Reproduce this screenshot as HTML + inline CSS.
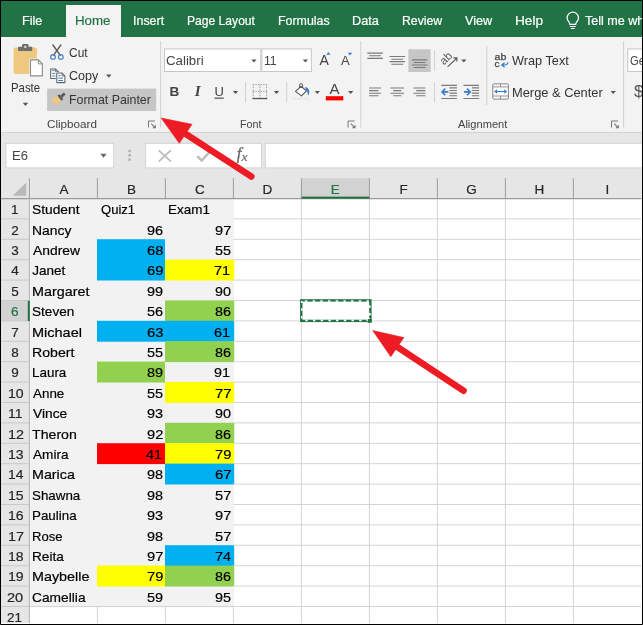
<!DOCTYPE html>
<html lang="en">
<head>
<meta charset="utf-8">
<title>Excel - Format Painter</title>
<style>
html,body{margin:0;padding:0;}
body{width:643px;height:625px;overflow:hidden;background:#fff;position:relative;font-family:"Liberation Sans",sans-serif;}
#app{position:absolute;left:0;top:0;width:643px;height:625px;overflow:hidden;background:#fff;}
svg{position:absolute;left:0;top:0;will-change:transform;}
.r{position:absolute;}
#txt{position:absolute;left:0;top:0;width:643px;height:625px;will-change:transform;}
.t{position:absolute;white-space:pre;transform-origin:0 0;font-family:"Liberation Sans",sans-serif;}
</style>
</head>
<body>
<div id="app">
<!-- base layer: backgrounds -->
<div class="r" style="left:0;top:0;width:643px;height:37px;background:#217346"></div>
<div class="r" style="left:0;top:37px;width:643px;height:95.5px;background:#f3f3f3"></div>
<div class="r" style="left:0;top:132.4px;width:643px;height:66.2px;background:#e6e6e6"></div>
<div class="r" style="left:65.6px;top:4.8px;width:55.9px;height:33px;background:#f3f3f3"></div>

<svg width="643" height="625" viewBox="0 0 643 625">
<rect x="29.90" y="199.00" width="204.30" height="408.30" fill="#f2f2f2"/>
<rect x="97.00" y="239.20" width="68.00" height="20.90" fill="#00b0f0"/>
<rect x="97.00" y="259.60" width="68.00" height="20.90" fill="#00b0f0"/>
<rect x="165.00" y="259.60" width="69.20" height="20.90" fill="#ffff00"/>
<rect x="165.00" y="300.40" width="69.20" height="20.90" fill="#92d050"/>
<rect x="97.00" y="320.80" width="68.00" height="20.90" fill="#00b0f0"/>
<rect x="165.00" y="320.80" width="69.20" height="20.90" fill="#00b0f0"/>
<rect x="165.00" y="341.20" width="69.20" height="20.90" fill="#92d050"/>
<rect x="97.00" y="361.60" width="68.00" height="20.90" fill="#92d050"/>
<rect x="165.00" y="382.00" width="69.20" height="20.90" fill="#ffff00"/>
<rect x="165.00" y="422.80" width="69.20" height="20.90" fill="#92d050"/>
<rect x="97.00" y="443.20" width="68.00" height="20.90" fill="#ff0000"/>
<rect x="165.00" y="443.20" width="69.20" height="20.90" fill="#ffff00"/>
<rect x="165.00" y="463.60" width="69.20" height="20.90" fill="#00b0f0"/>
<rect x="165.00" y="545.20" width="69.20" height="20.90" fill="#00b0f0"/>
<rect x="97.00" y="565.60" width="68.00" height="20.90" fill="#ffff00"/>
<rect x="165.00" y="565.60" width="69.20" height="20.90" fill="#92d050"/>
<!-- ===== ribbon bottom line ===== -->
<rect x="0" y="131.9" width="643" height="1" fill="#d2d2d2"/>
<!-- ===== group separators ===== -->
<g stroke="#d0d0d0" stroke-width="1" fill="none">
<line x1="160.6" y1="41" x2="160.6" y2="127.5"/>
<line x1="360.8" y1="41" x2="360.8" y2="127.5"/>
<line x1="623.6" y1="41" x2="623.6" y2="127.5"/>
<line x1="245.5" y1="82" x2="245.5" y2="102.6"/>
<line x1="286.7" y1="82" x2="286.7" y2="102.6"/>
<line x1="434.6" y1="50.5" x2="434.6" y2="71"/>
<line x1="434.6" y1="82" x2="434.6" y2="102.6"/>
<line x1="486.8" y1="46.2" x2="486.8" y2="105"/>
</g>
<!-- ===== clipboard group ===== -->
<!-- paste icon -->
<g>
<rect x="14" y="47.9" width="22.5" height="25.7" rx="1.2" fill="#eec87e" stroke="#ecc470" stroke-width="0.7"/>
<rect x="22.1" y="44" width="6.4" height="4" rx="0.8" fill="#6e6e6e"/>
<rect x="18.1" y="46.7" width="14.1" height="4.3" rx="0.6" fill="#6e6e6e"/>
<circle cx="25.3" cy="46.9" r="1.1" fill="#e8e8e8"/>
<path d="M29.3 58.6 H39 L43.7 63.3 V77.1 H29.3 Z" fill="#f3f3f3"/>
<path d="M30.5 59.9 H38.4 L42.4 63.9 V75.9 H30.5 Z" fill="#fff" stroke="#8c8c8c" stroke-width="1.1" stroke-linejoin="round"/>
<path d="M38.4 59.9 V63.9 H42.4" fill="none" stroke="#8c8c8c" stroke-width="1"/>
</g>
<path d="M22.7 102.8 H28.2 L25.45 106.1 Z" fill="#555"/>
<!-- cut icon -->
<g fill="none" stroke-linecap="round">
<path d="M52.9 45 L60.2 55.2" stroke="#5a5a5a" stroke-width="1.4"/>
<path d="M60.9 45 L53.6 55.2" stroke="#5a5a5a" stroke-width="1.4"/>
<circle cx="53" cy="56.9" r="2.35" stroke="#4a7fc1" stroke-width="1.2"/>
<circle cx="60.8" cy="56.9" r="2.35" stroke="#4a7fc1" stroke-width="1.2"/>
</g>
<!-- copy icon -->
<g stroke-linejoin="round">
<path d="M50.7 69 H55.6 L58.4 71.8 V78.4 H50.7 Z" fill="#fff" stroke="#636363" stroke-width="1.05"/>
<path d="M55.6 69 V71.8 H58.4" fill="none" stroke="#636363" stroke-width="0.9"/>
<path d="M52.2 70.6 H54.6 M52.2 73.4 H55.4 M52.2 76 H55.4" stroke="#3b7cc9" stroke-width="1"/>
<path d="M55.9 72 H62.4 L65.5 75.1 V83.4 H55.9 Z" fill="#f3f3f3"/>
<path d="M56.8 73 H62 L64.9 75.9 V82.6 H56.8 Z" fill="#fff" stroke="#636363" stroke-width="1.05"/>
<path d="M62 73 V75.9 H64.9" fill="none" stroke="#636363" stroke-width="0.9"/>
<path d="M58.4 75.7 H60.6 M58.4 78.1 H63 M58.4 80.5 H63" stroke="#3b7cc9" stroke-width="1"/>
</g>
<path d="M106.2 74.6 H111.4 L108.8 77.8 Z" fill="#555"/>
<!-- format painter highlight + icon -->
<rect x="47.1" y="88.6" width="109.1" height="22.4" fill="#c6c6c6"/>
<g>
<path d="M50.9 99.4 L57.3 96 L61 101 L56.6 105.6 Z" fill="#eec87e"/>
<path d="M57.4 95.6 L59.5 94.2 L63.2 99 L61.4 100.8 Z" fill="#595959"/>
<path d="M60.4 95.6 L63.9 92.6 L65.6 94.5 L62.2 97.7 Z" fill="#595959"/>
</g>
<!-- dialog launchers -->
<g id="dl" fill="none" stroke="#777" stroke-width="1">
<path d="M148.5 127.5 V121 H155"/>
<path d="M151.2 123.7 L154.4 126.9" stroke-width="1.1"/><path d="M155.9 128.3 V124.7 L152.3 128.3 Z" fill="#777" stroke="none"/>
</g>
<g fill="none" stroke="#777" stroke-width="1" transform="translate(199.6,0)">
<path d="M148.5 127.5 V121 H155"/>
<path d="M151.2 123.7 L154.4 126.9" stroke-width="1.1"/><path d="M155.9 128.3 V124.7 L152.3 128.3 Z" fill="#777" stroke="none"/>
</g>
<g fill="none" stroke="#777" stroke-width="1" transform="translate(463,0)">
<path d="M148.5 127.5 V121 H155"/>
<path d="M151.2 123.7 L154.4 126.9" stroke-width="1.1"/><path d="M155.9 128.3 V124.7 L152.3 128.3 Z" fill="#777" stroke="none"/>
</g>
<!-- ===== font group ===== -->
<rect x="164.5" y="48.9" width="96.3" height="22.6" fill="#fff" stroke="#c6c6c6" stroke-width="1"/>
<rect x="261.9" y="48.9" width="49.5" height="22.6" fill="#fff" stroke="#c6c6c6" stroke-width="1"/>
<path d="M251.4 59.5 H256.6 L254 62.6 Z" fill="#555"/>
<path d="M302.8 59.5 H308 L305.4 62.6 Z" fill="#555"/>
<!-- grow/shrink carets -->
<path d="M326.2 54.7 L328.4 52 L330.6 54.7 Z" fill="#3b7cc9"/>
<path d="M347.8 52.7 H352.2 L350 55.4 Z" fill="#3b7cc9"/>
<!-- underline for U -->
<rect x="214.5" y="97.6" width="9.3" height="1.1" fill="#444"/>
<path d="M232.9 90.9 H238.1 L235.5 94 Z" fill="#555"/>
<!-- borders icon -->
<g stroke="#9a9a9a" stroke-width="1" stroke-dasharray="1.3 1.3" fill="none">
<path d="M252.8 84.6 H267 M252.8 91.4 H267 M253.2 84.2 V98 M259.9 84.2 V98 M266.6 84.2 V98"/>
</g>
<rect x="252.5" y="97.9" width="14.7" height="1.3" fill="#555"/>
<path d="M273.9 90.9 H279.1 L276.5 94 Z" fill="#555"/>
<!-- fill bucket -->
<g>
<path d="M295.5 91.4 L301 86.4 L306.5 90.8 L301.5 95.9 Z" fill="#fff" stroke="#555" stroke-width="1.1" stroke-linejoin="round"/>
<path d="M299.6 87.6 V85.2 A1.5 1.5 0 0 1 302.6 85.2 V87.6" fill="none" stroke="#555" stroke-width="1"/>
<path d="M304.9 87 C307.5 87.2 309.6 89.6 309.3 92.5 C309.2 93.8 308.6 94.9 307.9 95.4 C308 93.5 307.6 92.3 306.6 90.8 Z" fill="#3b7cc9"/>
<rect x="292.5" y="97.4" width="17" height="2.6" fill="#ececec"/>
</g>
<path d="M314.7 90.9 H319.9 L317.3 94 Z" fill="#555"/>
<!-- font colour bar -->
<rect x="325.8" y="96.2" width="17.5" height="4.2" fill="#ff0000"/>
<path d="M348.1 90.9 H353.3 L350.7 94 Z" fill="#555"/>
<!-- ===== alignment group ===== -->
<rect x="408.4" y="49.3" width="22.2" height="22.7" fill="#c6c6c6"/>
<g stroke="#7a7a7a" stroke-width="1.1" fill="none">
<path d="M367.3 53.1 H382.9 M369.1 55.7 H381 M367.3 58.4 H382.9"/>
<path d="M389.5 56.5 H405.1 M391.4 59.2 H403.2 M389.5 61.6 H405.1 M391.4 64.3 H403.2"/>
<path d="M411.9 59.9 H427.3 M413.8 62.5 H425.4 M411.9 65 H427.3 M413.8 67.5 H425.4"/>
<path d="M369.1 88 H381 M369.1 90.6 H378.5 M369.1 93.2 H381 M369.1 95.8 H378.5"/>
<path d="M390.4 88 H404.1 M393.2 90.6 H401.4 M390.4 93.2 H404.1 M393.2 95.8 H401.4"/>
<path d="M413.5 88 H425.4 M416.2 90.6 H425.4 M413.5 93.2 H425.4 M416.2 95.8 H425.4"/>
</g>
<!-- orientation icon -->
<g>
<text transform="translate(443.9,65.4) rotate(-45)" font-family="Liberation Sans, sans-serif" font-size="11.5" fill="#555">ab</text>
<path d="M447.6 66.8 L456.5 58.3 M453.4 57.9 H456.9 V61.4" fill="none" stroke="#555" stroke-width="1.1"/>
<path d="M461.2 59.4 H466.4 L463.8 62.5 Z" fill="#555"/>
</g>
<!-- indent icons -->
<g stroke="#7a7a7a" stroke-width="1.1" fill="none">
<path d="M441.3 85.4 H456.9 M449.4 87.9 H456.9 M449.4 90.5 H456.9 M449.4 93.1 H456.9 M449.4 95.8 H456.9 M441.3 98.5 H456.9"/>
<path d="M463.5 85.4 H479.1 M471.9 87.9 H479.1 M471.9 90.5 H479.1 M471.9 93.1 H479.1 M471.9 95.8 H479.1 M463.5 98.5 H479.1"/>
</g>
<g stroke="#3b7cc9" stroke-width="1.6" fill="none">
<path d="M448.4 91.9 H442.3 M445.3 88.6 L442 91.9 L445.3 95.2"/>
<path d="M463.9 91.9 H469.9 M467 88.6 L470.3 91.9 L467 95.2"/>
</g>
<!-- wrap text icon -->
<text x="494.6" y="59.7" font-family="Liberation Sans, sans-serif" font-size="9.5" fill="#444" stroke="#444" stroke-width="0.25" textLength="11.8" lengthAdjust="spacingAndGlyphs">ab</text>
<text x="494.6" y="66.7" font-family="Liberation Sans, sans-serif" font-size="9.5" fill="#444" stroke="#444" stroke-width="0.25" textLength="5" lengthAdjust="spacingAndGlyphs">c</text>
<path d="M507.8 62.2 C508 64.4 506 65.3 502.2 65.1 M504.6 62.8 L501.8 65.1 L504.6 67.2" fill="none" stroke="#3b7cc9" stroke-width="1.2"/>
<!-- merge icon -->
<g>
<rect x="492.8" y="83.9" width="15.6" height="15.2" rx="0.8" fill="#fcfcfc" stroke="#858585" stroke-width="1"/>
<path d="M492.8 86.9 H508.4 M492.8 96 H508.4 M500.5 83.9 V86.9 M500.5 96 V99.1" stroke="#8a8a8a" stroke-width="0.9" fill="none"/>
<path d="M495.4 91.5 H505.8" stroke="#3b7cc9" stroke-width="1.1" fill="none"/>
<path d="M494.1 91.5 L497 89.2 V93.8 Z M507.1 91.5 L504.2 89.2 V93.8 Z" fill="#3b7cc9"/>
</g>
<path d="M610.6 90.9 H615.8 L613.2 94 Z" fill="#555"/>
<!-- number format box (cut off) -->
<rect x="627.8" y="48.9" width="20" height="22.6" fill="#fff" stroke="#c6c6c6" stroke-width="1"/>
<!-- tell me bulb -->
<g fill="none" stroke="#fff" stroke-width="1.2">
<path d="M569.9 24.3 C569.9 22 567.1 21 567.1 17.9 A5.7 5.7 0 0 1 578.5 17.9 C578.5 21 575.7 22 575.7 24.3 Z"/>
<path d="M569.9 26.5 H575.7 M570.9 28.5 H574.7"/>
</g>
<!-- ===== formula bar ===== -->
<rect x="6" y="143.3" width="107.6" height="24.6" fill="#fff" stroke="#d0d0d0" stroke-width="0.9"/>
<path d="M100.4 153.7 H106.6 L103.5 157.7 Z" fill="#666"/>
<g fill="#b2b2b2">
<rect x="128.3" y="149.8" width="2.6" height="2.4"/>
<rect x="128.3" y="154.1" width="2.6" height="2.4"/>
<rect x="128.3" y="158.4" width="2.6" height="2.4"/>
</g>
<rect x="145.7" y="143.3" width="115.8" height="24.6" fill="#fff" stroke="#d0d0d0" stroke-width="0.9"/>
<rect x="265.3" y="143.3" width="380" height="24.6" fill="#fff" stroke="#d0d0d0" stroke-width="0.9"/>
<path d="M158.8 150.4 L170.8 161.4 M170.8 150.4 L158.8 161.4" stroke="#b8b8b8" stroke-width="1.5" fill="none"/>
<path d="M197.3 156.2 L201.7 160.6 L209.2 152.4" stroke="#bcbcbc" stroke-width="2.4" fill="none"/>

<g stroke="#d4d4d4" stroke-width="1" fill="none">
<line x1="97.40" y1="607.00" x2="97.40" y2="624"/>
<line x1="165.40" y1="607.00" x2="165.40" y2="624"/>
<line x1="233.40" y1="607.00" x2="233.40" y2="624"/>
<line x1="301.40" y1="199.00" x2="301.40" y2="624"/>
<line x1="369.40" y1="199.00" x2="369.40" y2="624"/>
<line x1="437.40" y1="199.00" x2="437.40" y2="624"/>
<line x1="505.40" y1="199.00" x2="505.40" y2="624"/>
<line x1="573.40" y1="199.00" x2="573.40" y2="624"/>
<line x1="233.40" y1="218.90" x2="641" y2="218.90"/>
<line x1="233.40" y1="239.30" x2="641" y2="239.30"/>
<line x1="233.40" y1="259.70" x2="641" y2="259.70"/>
<line x1="233.40" y1="280.10" x2="641" y2="280.10"/>
<line x1="233.40" y1="300.50" x2="641" y2="300.50"/>
<line x1="233.40" y1="320.90" x2="641" y2="320.90"/>
<line x1="233.40" y1="341.30" x2="641" y2="341.30"/>
<line x1="233.40" y1="361.70" x2="641" y2="361.70"/>
<line x1="233.40" y1="382.10" x2="641" y2="382.10"/>
<line x1="233.40" y1="402.50" x2="641" y2="402.50"/>
<line x1="233.40" y1="422.90" x2="641" y2="422.90"/>
<line x1="233.40" y1="443.30" x2="641" y2="443.30"/>
<line x1="233.40" y1="463.70" x2="641" y2="463.70"/>
<line x1="233.40" y1="484.10" x2="641" y2="484.10"/>
<line x1="233.40" y1="504.50" x2="641" y2="504.50"/>
<line x1="233.40" y1="524.90" x2="641" y2="524.90"/>
<line x1="233.40" y1="545.30" x2="641" y2="545.30"/>
<line x1="233.40" y1="565.70" x2="641" y2="565.70"/>
<line x1="233.40" y1="586.10" x2="641" y2="586.10"/>
<line x1="29.40" y1="606.50" x2="641" y2="606.50"/>
</g>
<rect x="0" y="198.50" width="29.40" height="430" fill="#e6e6e6"/>
<rect x="301.70" y="178.3" width="67.70" height="20" fill="#d2d2d2"/>
<rect x="301.70" y="196.8" width="67.70" height="1.9" fill="#217346"/>
<rect x="0" y="300.80" width="29.40" height="20.10" fill="#d2d2d2"/>
<g stroke="#9c9c9c" stroke-width="1" fill="none">
<line x1="29.40" y1="178.2" x2="29.40" y2="198.5"/>
<line x1="97.40" y1="178.2" x2="97.40" y2="198.5"/>
<line x1="165.40" y1="178.2" x2="165.40" y2="198.5"/>
<line x1="233.40" y1="178.2" x2="233.40" y2="198.5"/>
<line x1="301.40" y1="178.2" x2="301.40" y2="198.5"/>
<line x1="369.40" y1="178.2" x2="369.40" y2="198.5"/>
<line x1="437.40" y1="178.2" x2="437.40" y2="198.5"/>
<line x1="505.40" y1="178.2" x2="505.40" y2="198.5"/>
<line x1="573.40" y1="178.2" x2="573.40" y2="198.5"/>
</g>
<g stroke="#c9c9c9" stroke-width="1" fill="none">
<line x1="1" y1="218.90" x2="29.40" y2="218.90"/>
<line x1="1" y1="239.30" x2="29.40" y2="239.30"/>
<line x1="1" y1="259.70" x2="29.40" y2="259.70"/>
<line x1="1" y1="280.10" x2="29.40" y2="280.10"/>
<line x1="1" y1="300.50" x2="29.40" y2="300.50"/>
<line x1="1" y1="320.90" x2="29.40" y2="320.90"/>
<line x1="1" y1="341.30" x2="29.40" y2="341.30"/>
<line x1="1" y1="361.70" x2="29.40" y2="361.70"/>
<line x1="1" y1="382.10" x2="29.40" y2="382.10"/>
<line x1="1" y1="402.50" x2="29.40" y2="402.50"/>
<line x1="1" y1="422.90" x2="29.40" y2="422.90"/>
<line x1="1" y1="443.30" x2="29.40" y2="443.30"/>
<line x1="1" y1="463.70" x2="29.40" y2="463.70"/>
<line x1="1" y1="484.10" x2="29.40" y2="484.10"/>
<line x1="1" y1="504.50" x2="29.40" y2="504.50"/>
<line x1="1" y1="524.90" x2="29.40" y2="524.90"/>
<line x1="1" y1="545.30" x2="29.40" y2="545.30"/>
<line x1="1" y1="565.70" x2="29.40" y2="565.70"/>
<line x1="1" y1="586.10" x2="29.40" y2="586.10"/>
<line x1="1" y1="606.50" x2="29.40" y2="606.50"/>
</g>
<line x1="1" y1="198.60" x2="641.5" y2="198.60" stroke="#9a9a9a" stroke-width="1.1"/>
<line x1="29.40" y1="198.50" x2="29.40" y2="624" stroke="#b4b4b4" stroke-width="1"/>
<rect x="27.80" y="300.80" width="2" height="20.20" fill="#217346"/>
<rect x="301.70" y="196.8" width="67.70" height="1.9" fill="#217346"/>
<path d="M26.3 182.6 V195.8 H12.6 Z" fill="#b9b9b9"/>
<rect x="301.3" y="300.4" width="69.1" height="20.5" fill="none" stroke="#217346" stroke-width="2.4"/>
<rect x="301.9" y="301" width="67.9" height="19.3" fill="none" stroke="#fff" stroke-width="1.7" stroke-dasharray="2.4 5.3" stroke-dashoffset="-3"/>
<rect x="366.6" y="318" width="3.4" height="3.2" fill="#fff"/>
<rect x="367.7" y="319" width="4" height="3.8" fill="#217346"/>
</svg>
<div id="txt">
<span class="t" style="left:21.66px;top:13px;color:#fff;font-size:13.5px;line-height:15px;-webkit-text-stroke:0.2px;transform:scaleX(0.9383);">File</span>
<span class="t" style="left:75.31px;top:13px;color:#217346;font-size:13.5px;line-height:15px;-webkit-text-stroke:0.2px;transform:scaleX(0.9855);">Home</span>
<span class="t" style="left:132.85px;top:13px;color:#fff;font-size:13.5px;line-height:15px;-webkit-text-stroke:0.2px;transform:scaleX(0.9231);">Insert</span>
<span class="t" style="left:187.10px;top:13px;color:#fff;font-size:13.5px;line-height:15px;-webkit-text-stroke:0.2px;transform:scaleX(0.8963);">Page Layout</span>
<span class="t" style="left:278.08px;top:13px;color:#fff;font-size:13.5px;line-height:15px;-webkit-text-stroke:0.2px;transform:scaleX(0.9187);">Formulas</span>
<span class="t" style="left:352.35px;top:13px;color:#fff;font-size:13.5px;line-height:15px;-webkit-text-stroke:0.2px;transform:scaleX(0.9455);">Data</span>
<span class="t" style="left:402.09px;top:13px;color:#fff;font-size:13.5px;line-height:15px;-webkit-text-stroke:0.2px;transform:scaleX(0.9087);">Review</span>
<span class="t" style="left:465.40px;top:13px;color:#fff;font-size:13.5px;line-height:15px;-webkit-text-stroke:0.2px;transform:scaleX(0.9379);">View</span>
<span class="t" style="left:514.99px;top:13px;color:#fff;font-size:13.5px;line-height:15px;-webkit-text-stroke:0.2px;transform:scaleX(1.0095);">Help</span>
<span class="t" style="left:584.57px;top:13px;color:#fff;font-size:13.5px;line-height:15px;-webkit-text-stroke:0.2px;transform:scaleX(0.9304);">Tell me wh</span>
<span class="t" style="left:10.88px;top:80px;color:#333;font-size:13px;line-height:15px;transform:scaleX(0.8740);">Paste</span>
<span class="t" style="left:68.81px;top:45px;color:#333;font-size:13px;line-height:15px;transform:scaleX(0.9231);">Cut</span>
<span class="t" style="left:68.78px;top:68px;color:#333;font-size:13px;line-height:15px;transform:scaleX(0.9661);">Copy</span>
<span class="t" style="left:68.75px;top:92px;color:#333;font-size:13px;line-height:15px;transform:scaleX(0.9522);">Format Painter</span>
<span class="t" style="left:46.79px;top:118px;color:#444;font-size:11.5px;line-height:12px;transform:scaleX(1.0146);">Clipboard</span>
<span class="t" style="left:166.23px;top:53px;color:#444;font-size:13px;line-height:15px;transform:scaleX(1.0213);">Calibri</span>
<span class="t" style="left:264.06px;top:53px;color:#444;font-size:13px;line-height:15px;transform:scaleX(0.9362);">11</span>
<span class="t" style="left:240.27px;top:118px;color:#444;font-size:11.5px;line-height:12px;transform:scaleX(0.9341);">Font</span>
<span class="t" style="left:512.40px;top:53px;color:#333;font-size:13px;line-height:15px;transform:scaleX(0.9793);">Wrap Text</span>
<span class="t" style="left:511.51px;top:85px;color:#333;font-size:13px;line-height:15px;transform:scaleX(0.9890);">Merge &amp; Center</span>
<span class="t" style="left:458.40px;top:118px;color:#444;font-size:11.5px;line-height:12px;transform:scaleX(0.9647);">Alignment</span>
<span class="t" style="left:629.85px;top:53px;color:#444;font-size:13px;line-height:15px;transform:scaleX(0.8625);">Ge</span>
<span class="t" style="left:634.00px;top:82px;color:#555;font-size:17px;line-height:19px;">$</span>
<span class="t" style="left:11.70px;top:148px;color:#444;font-size:13px;line-height:15px;transform:scaleX(1.0035);">E6</span>
<span class="t" style="left:169.62px;top:84px;color:#444;font-size:13.5px;line-height:15px;font-weight:bold;">B</span>
<span class="t" style="left:194.75px;top:83px;color:#444;font-size:15px;line-height:17px;font-style:italic;font-family:Liberation Serif,serif;font-weight:bold;">I</span>
<span class="t" style="left:214.38px;top:84px;color:#444;font-size:13px;line-height:15px;">U</span>
<span class="t" style="left:319.50px;top:52px;color:#444;font-size:14px;line-height:16px;">A</span>
<span class="t" style="left:340.88px;top:53px;color:#444;font-size:13px;line-height:15px;">A</span>
<span class="t" style="left:329.50px;top:80px;color:#444;font-size:15px;line-height:17px;">A</span>
<span class="t" style="left:236.68px;top:145px;color:#6a6a6a;font-size:16.5px;line-height:18px;font-style:italic;font-family:Liberation Serif,serif;-webkit-text-stroke:0.35px;">f</span>
<span class="t" style="left:241.62px;top:149px;color:#6a6a6a;font-size:13.5px;line-height:15px;font-style:italic;font-family:Liberation Serif,serif;-webkit-text-stroke:0.35px;-webkit-text-stroke:0.2px;">x</span>
<span class="t" style="left:59.62px;top:182px;color:#262626;font-size:13.5px;line-height:15px;-webkit-text-stroke:0.2px;">A</span>
<span class="t" style="left:126.88px;top:182px;color:#262626;font-size:13.5px;line-height:15px;-webkit-text-stroke:0.2px;">B</span>
<span class="t" style="left:194.90px;top:182px;color:#262626;font-size:13.5px;line-height:15px;-webkit-text-stroke:0.2px;">C</span>
<span class="t" style="left:262.50px;top:182px;color:#262626;font-size:13.5px;line-height:15px;-webkit-text-stroke:0.2px;">D</span>
<span class="t" style="left:330.65px;top:182px;color:#217346;font-size:13.5px;line-height:15px;-webkit-text-stroke:0.2px;">E</span>
<span class="t" style="left:399.52px;top:182px;color:#262626;font-size:13.5px;line-height:15px;-webkit-text-stroke:0.2px;">F</span>
<span class="t" style="left:466.23px;top:182px;color:#262626;font-size:13.5px;line-height:15px;-webkit-text-stroke:0.2px;">G</span>
<span class="t" style="left:534.58px;top:182px;color:#262626;font-size:13.5px;line-height:15px;-webkit-text-stroke:0.2px;">H</span>
<span class="t" style="left:605.48px;top:182px;color:#262626;font-size:13.5px;line-height:15px;-webkit-text-stroke:0.2px;">I</span>
<span class="t" style="left:31.99px;top:202px;color:#000;font-size:13.5px;line-height:15px;-webkit-text-stroke:0.2px;transform:scaleX(1.0217);">Student</span>
<span class="t" style="left:100.62px;top:202px;color:#000;font-size:13.5px;line-height:15px;-webkit-text-stroke:0.2px;transform:scaleX(0.9664);">Quiz1</span>
<span class="t" style="left:168.00px;top:202px;color:#000;font-size:13.5px;line-height:15px;-webkit-text-stroke:0.2px;transform:scaleX(0.9975);">Exam1</span>
<span class="t" style="left:11.05px;top:202px;color:#262626;font-size:13.5px;line-height:15px;-webkit-text-stroke:0.2px;">1</span>
<span class="t" style="left:32.17px;top:223px;color:#000;font-size:13.5px;line-height:15px;-webkit-text-stroke:0.2px;transform:scaleX(1.0282);">Nancy</span>
<span class="t" style="left:146.96px;top:223px;color:#000;font-size:13.5px;line-height:15px;-webkit-text-stroke:0.2px;transform:scaleX(1.0714);">96</span>
<span class="t" style="left:215.06px;top:223px;color:#000;font-size:13.5px;line-height:15px;-webkit-text-stroke:0.2px;transform:scaleX(1.0836);">97</span>
<span class="t" style="left:11.25px;top:223px;color:#262626;font-size:13.5px;line-height:15px;-webkit-text-stroke:0.2px;">2</span>
<span class="t" style="left:32.50px;top:243px;color:#000;font-size:13.5px;line-height:15px;-webkit-text-stroke:0.2px;transform:scaleX(1.0273);">Andrew</span>
<span class="t" style="left:146.68px;top:243px;color:#000;font-size:13.5px;line-height:15px;-webkit-text-stroke:0.2px;transform:scaleX(1.0909);">68</span>
<span class="t" style="left:215.07px;top:243px;color:#000;font-size:13.5px;line-height:15px;-webkit-text-stroke:0.2px;transform:scaleX(1.0643);">55</span>
<span class="t" style="left:11.25px;top:243px;color:#262626;font-size:13.5px;line-height:15px;-webkit-text-stroke:0.2px;">3</span>
<span class="t" style="left:32.25px;top:263px;color:#000;font-size:13.5px;line-height:15px;-webkit-text-stroke:0.2px;transform:scaleX(1.0000);">Janet</span>
<span class="t" style="left:146.68px;top:263px;color:#000;font-size:13.5px;line-height:15px;-webkit-text-stroke:0.2px;transform:scaleX(1.0909);">69</span>
<span class="t" style="left:214.26px;top:263px;color:#000;font-size:13.5px;line-height:15px;-webkit-text-stroke:0.2px;transform:scaleX(1.0650);">71</span>
<span class="t" style="left:11.25px;top:263px;color:#262626;font-size:13.5px;line-height:15px;-webkit-text-stroke:0.2px;">4</span>
<span class="t" style="left:32.14px;top:284px;color:#000;font-size:13.5px;line-height:15px;-webkit-text-stroke:0.2px;transform:scaleX(1.0623);">Margaret</span>
<span class="t" style="left:146.96px;top:284px;color:#000;font-size:13.5px;line-height:15px;-webkit-text-stroke:0.2px;transform:scaleX(1.0714);">99</span>
<span class="t" style="left:215.07px;top:284px;color:#000;font-size:13.5px;line-height:15px;-webkit-text-stroke:0.2px;transform:scaleX(1.0643);">90</span>
<span class="t" style="left:11.25px;top:284px;color:#262626;font-size:13.5px;line-height:15px;-webkit-text-stroke:0.2px;">5</span>
<span class="t" style="left:32.00px;top:304px;color:#000;font-size:13.5px;line-height:15px;-webkit-text-stroke:0.2px;transform:scaleX(1.0061);">Steven</span>
<span class="t" style="left:146.96px;top:304px;color:#000;font-size:13.5px;line-height:15px;-webkit-text-stroke:0.2px;transform:scaleX(1.0714);">56</span>
<span class="t" style="left:215.07px;top:304px;color:#000;font-size:13.5px;line-height:15px;-webkit-text-stroke:0.2px;transform:scaleX(1.0643);">86</span>
<span class="t" style="left:11.12px;top:304px;color:#217346;font-size:13.5px;line-height:15px;-webkit-text-stroke:0.2px;">6</span>
<span class="t" style="left:32.13px;top:325px;color:#000;font-size:13.5px;line-height:15px;-webkit-text-stroke:0.2px;transform:scaleX(1.0737);">Michael</span>
<span class="t" style="left:146.68px;top:325px;color:#000;font-size:13.5px;line-height:15px;-webkit-text-stroke:0.2px;transform:scaleX(1.0909);">63</span>
<span class="t" style="left:214.26px;top:325px;color:#000;font-size:13.5px;line-height:15px;-webkit-text-stroke:0.2px;transform:scaleX(1.0650);">61</span>
<span class="t" style="left:11.25px;top:325px;color:#262626;font-size:13.5px;line-height:15px;-webkit-text-stroke:0.2px;">7</span>
<span class="t" style="left:32.15px;top:345px;color:#000;font-size:13.5px;line-height:15px;-webkit-text-stroke:0.2px;transform:scaleX(1.0456);">Robert</span>
<span class="t" style="left:146.96px;top:345px;color:#000;font-size:13.5px;line-height:15px;-webkit-text-stroke:0.2px;transform:scaleX(1.0714);">55</span>
<span class="t" style="left:215.07px;top:345px;color:#000;font-size:13.5px;line-height:15px;-webkit-text-stroke:0.2px;transform:scaleX(1.0643);">86</span>
<span class="t" style="left:11.25px;top:345px;color:#262626;font-size:13.5px;line-height:15px;-webkit-text-stroke:0.2px;">8</span>
<span class="t" style="left:32.21px;top:365px;color:#000;font-size:13.5px;line-height:15px;-webkit-text-stroke:0.2px;transform:scaleX(0.9940);">Laura</span>
<span class="t" style="left:146.96px;top:365px;color:#000;font-size:13.5px;line-height:15px;-webkit-text-stroke:0.2px;transform:scaleX(1.0714);">89</span>
<span class="t" style="left:214.26px;top:365px;color:#000;font-size:13.5px;line-height:15px;-webkit-text-stroke:0.2px;transform:scaleX(1.0650);">91</span>
<span class="t" style="left:11.25px;top:365px;color:#262626;font-size:13.5px;line-height:15px;-webkit-text-stroke:0.2px;">9</span>
<span class="t" style="left:32.50px;top:386px;color:#000;font-size:13.5px;line-height:15px;-webkit-text-stroke:0.2px;transform:scaleX(0.9919);">Anne</span>
<span class="t" style="left:146.96px;top:386px;color:#000;font-size:13.5px;line-height:15px;-webkit-text-stroke:0.2px;transform:scaleX(1.0714);">55</span>
<span class="t" style="left:214.77px;top:386px;color:#000;font-size:13.5px;line-height:15px;-webkit-text-stroke:0.2px;transform:scaleX(1.1037);">77</span>
<span class="t" style="left:7.86px;top:386px;color:#262626;font-size:13.5px;line-height:15px;-webkit-text-stroke:0.2px;transform:scaleX(1.0444);">10</span>
<span class="t" style="left:32.50px;top:406px;color:#000;font-size:13.5px;line-height:15px;-webkit-text-stroke:0.2px;transform:scaleX(1.0227);">Vince</span>
<span class="t" style="left:146.96px;top:406px;color:#000;font-size:13.5px;line-height:15px;-webkit-text-stroke:0.2px;transform:scaleX(1.0714);">93</span>
<span class="t" style="left:215.07px;top:406px;color:#000;font-size:13.5px;line-height:15px;-webkit-text-stroke:0.2px;transform:scaleX(1.0643);">90</span>
<span class="t" style="left:7.87px;top:406px;color:#262626;font-size:13.5px;line-height:15px;-webkit-text-stroke:0.2px;transform:scaleX(1.0320);">11</span>
<span class="t" style="left:32.24px;top:427px;color:#000;font-size:13.5px;line-height:15px;-webkit-text-stroke:0.2px;transform:scaleX(1.0479);">Theron</span>
<span class="t" style="left:146.95px;top:427px;color:#000;font-size:13.5px;line-height:15px;-webkit-text-stroke:0.2px;transform:scaleX(1.0909);">92</span>
<span class="t" style="left:215.07px;top:427px;color:#000;font-size:13.5px;line-height:15px;-webkit-text-stroke:0.2px;transform:scaleX(1.0643);">86</span>
<span class="t" style="left:7.84px;top:427px;color:#262626;font-size:13.5px;line-height:15px;-webkit-text-stroke:0.2px;transform:scaleX(1.0642);">12</span>
<span class="t" style="left:32.50px;top:447px;color:#000;font-size:13.5px;line-height:15px;-webkit-text-stroke:0.2px;transform:scaleX(1.0071);">Amira</span>
<span class="t" style="left:146.26px;top:447px;color:#000;font-size:13.5px;line-height:15px;-webkit-text-stroke:0.2px;transform:scaleX(1.0650);">41</span>
<span class="t" style="left:214.79px;top:447px;color:#000;font-size:13.5px;line-height:15px;-webkit-text-stroke:0.2px;transform:scaleX(1.0836);">79</span>
<span class="t" style="left:7.86px;top:447px;color:#262626;font-size:13.5px;line-height:15px;-webkit-text-stroke:0.2px;transform:scaleX(1.0444);">13</span>
<span class="t" style="left:32.14px;top:467px;color:#000;font-size:13.5px;line-height:15px;-webkit-text-stroke:0.2px;transform:scaleX(1.0582);">Marica</span>
<span class="t" style="left:146.96px;top:467px;color:#000;font-size:13.5px;line-height:15px;-webkit-text-stroke:0.2px;transform:scaleX(1.0714);">98</span>
<span class="t" style="left:214.77px;top:467px;color:#000;font-size:13.5px;line-height:15px;-webkit-text-stroke:0.2px;transform:scaleX(1.1037);">67</span>
<span class="t" style="left:7.87px;top:467px;color:#262626;font-size:13.5px;line-height:15px;-webkit-text-stroke:0.2px;transform:scaleX(1.0255);">14</span>
<span class="t" style="left:32.01px;top:488px;color:#000;font-size:13.5px;line-height:15px;-webkit-text-stroke:0.2px;transform:scaleX(0.9896);">Shawna</span>
<span class="t" style="left:146.96px;top:488px;color:#000;font-size:13.5px;line-height:15px;-webkit-text-stroke:0.2px;transform:scaleX(1.0714);">98</span>
<span class="t" style="left:215.06px;top:488px;color:#000;font-size:13.5px;line-height:15px;-webkit-text-stroke:0.2px;transform:scaleX(1.0836);">57</span>
<span class="t" style="left:7.86px;top:488px;color:#262626;font-size:13.5px;line-height:15px;-webkit-text-stroke:0.2px;transform:scaleX(1.0444);">15</span>
<span class="t" style="left:32.21px;top:508px;color:#000;font-size:13.5px;line-height:15px;-webkit-text-stroke:0.2px;transform:scaleX(0.9898);">Paulina</span>
<span class="t" style="left:146.96px;top:508px;color:#000;font-size:13.5px;line-height:15px;-webkit-text-stroke:0.2px;transform:scaleX(1.0714);">93</span>
<span class="t" style="left:215.06px;top:508px;color:#000;font-size:13.5px;line-height:15px;-webkit-text-stroke:0.2px;transform:scaleX(1.0836);">97</span>
<span class="t" style="left:7.86px;top:508px;color:#262626;font-size:13.5px;line-height:15px;-webkit-text-stroke:0.2px;transform:scaleX(1.0444);">16</span>
<span class="t" style="left:32.23px;top:529px;color:#000;font-size:13.5px;line-height:15px;-webkit-text-stroke:0.2px;transform:scaleX(0.9683);">Rose</span>
<span class="t" style="left:146.96px;top:529px;color:#000;font-size:13.5px;line-height:15px;-webkit-text-stroke:0.2px;transform:scaleX(1.0714);">98</span>
<span class="t" style="left:215.06px;top:529px;color:#000;font-size:13.5px;line-height:15px;-webkit-text-stroke:0.2px;transform:scaleX(1.0836);">57</span>
<span class="t" style="left:7.84px;top:529px;color:#262626;font-size:13.5px;line-height:15px;-webkit-text-stroke:0.2px;transform:scaleX(1.0642);">17</span>
<span class="t" style="left:32.19px;top:549px;color:#000;font-size:13.5px;line-height:15px;-webkit-text-stroke:0.2px;transform:scaleX(1.0098);">Reita</span>
<span class="t" style="left:146.95px;top:549px;color:#000;font-size:13.5px;line-height:15px;-webkit-text-stroke:0.2px;transform:scaleX(1.0909);">97</span>
<span class="t" style="left:214.80px;top:549px;color:#000;font-size:13.5px;line-height:15px;-webkit-text-stroke:0.2px;transform:scaleX(1.0643);">74</span>
<span class="t" style="left:7.86px;top:549px;color:#262626;font-size:13.5px;line-height:15px;-webkit-text-stroke:0.2px;transform:scaleX(1.0444);">18</span>
<span class="t" style="left:32.14px;top:569px;color:#000;font-size:13.5px;line-height:15px;-webkit-text-stroke:0.2px;transform:scaleX(1.0629);">Maybelle</span>
<span class="t" style="left:146.68px;top:569px;color:#000;font-size:13.5px;line-height:15px;-webkit-text-stroke:0.2px;transform:scaleX(1.0909);">79</span>
<span class="t" style="left:215.07px;top:569px;color:#000;font-size:13.5px;line-height:15px;-webkit-text-stroke:0.2px;transform:scaleX(1.0643);">86</span>
<span class="t" style="left:7.86px;top:569px;color:#262626;font-size:13.5px;line-height:15px;-webkit-text-stroke:0.2px;transform:scaleX(1.0444);">19</span>
<span class="t" style="left:31.74px;top:590px;color:#000;font-size:13.5px;line-height:15px;-webkit-text-stroke:0.2px;transform:scaleX(1.0193);">Camellia</span>
<span class="t" style="left:146.96px;top:590px;color:#000;font-size:13.5px;line-height:15px;-webkit-text-stroke:0.2px;transform:scaleX(1.0714);">59</span>
<span class="t" style="left:215.07px;top:590px;color:#000;font-size:13.5px;line-height:15px;-webkit-text-stroke:0.2px;transform:scaleX(1.0643);">95</span>
<span class="t" style="left:7.39px;top:590px;color:#262626;font-size:13.5px;line-height:15px;-webkit-text-stroke:0.2px;transform:scaleX(1.0764);">20</span>
<span class="t" style="left:7.46px;top:610px;color:#262626;font-size:13.5px;line-height:15px;-webkit-text-stroke:0.2px;transform:scaleX(0.9891);">21</span>
</div>
<svg width="643" height="625" viewBox="0 0 643 625">
<line x1="185" y1="133.5" x2="251.3" y2="176.5" stroke="#ed1c24" stroke-width="6.5" stroke-linecap="round"/><path d="M161.2 118.1 L192 124.3 L179.3 143.3 Z" fill="#ed1c24" stroke="#ed1c24" stroke-width="0.6" stroke-linejoin="round"/>
<line x1="397" y1="346.8" x2="463.6" y2="390.8" stroke="#ed1c24" stroke-width="6.5" stroke-linecap="round"/><path d="M372.7 330.5 L403.9 337.6 L390.8 356.7 Z" fill="#ed1c24" stroke="#ed1c24" stroke-width="0.6" stroke-linejoin="round"/>
<rect x="1" y="623" width="641" height="1" fill="#fff" opacity="0.85"/>
<path d="M0.5 0.5 H642.5 V624.5 H0.5 Z" fill="none" stroke="#000" stroke-width="1"/>
</svg>
</div>
</body>
</html>
